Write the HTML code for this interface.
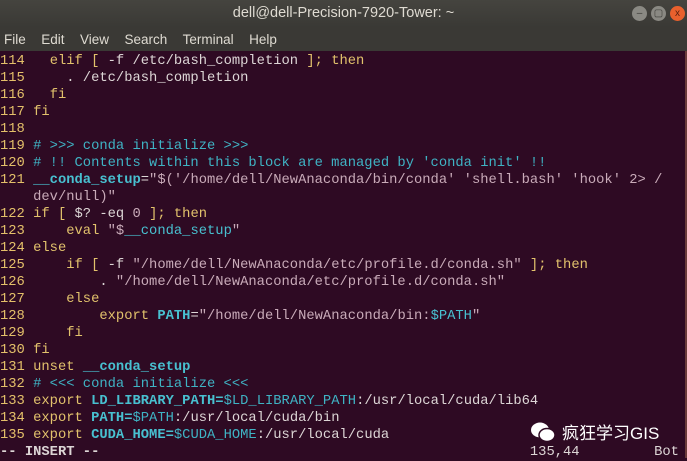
<!DOCTYPE html>
<html><head><meta charset="utf-8"><style>
*{margin:0;padding:0;box-sizing:border-box}
body{width:687px;height:458px;overflow:hidden;background:#2e0a23;font-family:"Liberation Sans",sans-serif}
#title{position:absolute;left:0;top:0;width:687px;height:27px;background:linear-gradient(#45443f,#3a3935);color:#dfdbd2;font-size:14.5px;text-align:center;line-height:27px}
#menu{position:absolute;left:0;top:27px;width:687px;height:24px;background:#3a3935;color:#dfdbd2;font-size:13.5px;line-height:26px;padding-left:4px;word-spacing:4px}
.btn{position:absolute;top:6px;width:15px;height:15px;border-radius:50%;background:#8a8983;color:#3d3c38;font-size:10px;line-height:15px;text-align:center}
#term{position:absolute;left:0;top:51px;width:687px;height:407px;border-right:2px solid #6a3a3a;padding-top:2px}
pre{font-family:"Liberation Mono",monospace;font-size:13.8px;line-height:17px;color:#ddd6d6;white-space:pre}
.n{color:#e4c06a}.k{color:#e2c26c}.c{color:#3fb3c4}.v{color:#48c0d0;font-weight:bold}.s{color:#c9abb9}
#wm{position:absolute;left:530px;top:419px;color:#fff;font-size:17px;font-family:"Liberation Sans","Noto Sans CJK SC",sans-serif}
</style></head><body>
<div id="title">dell@dell-Precision-7920-Tower: ~</div>
<div class="btn" style="left:632px">–</div>
<div class="btn" style="left:651px">▢</div>
<div class="btn" style="left:670px;background:#e9602d;color:#5a2010">x</div>
<div id="menu">File&nbsp; Edit&nbsp; View&nbsp; Search&nbsp; Terminal&nbsp; Help</div>
<div id="term"><pre><span class="n">114</span>   <span class="k">elif</span> <span class="k">[</span> -f /etc/bash_completion <span class="k">]; then</span>
<span class="n">115</span>     . /etc/bash_completion
<span class="n">116</span>   <span class="k">fi</span>
<span class="n">117</span> <span class="k">fi</span>
<span class="n">118</span>
<span class="n">119</span> <span class="c"># &gt;&gt;&gt; conda initialize &gt;&gt;&gt;</span>
<span class="n">120</span> <span class="c"># !! Contents within this block are managed by 'conda init' !!</span>
<span class="n">121</span> <span class="v">__conda_setup</span>=<span class="s">"$('/home/dell/NewAnaconda/bin/conda' 'shell.bash' 'hook' 2&gt; /</span>
    <span class="s">dev/null)"</span>
<span class="n">122</span> <span class="k">if [</span> $? -eq <span class="s">0</span> <span class="k">]; then</span>
<span class="n">123</span>     <span class="k">eval</span> <span class="s">"$</span><span class="v" style="font-weight:normal">__conda_setup</span><span class="s">"</span>
<span class="n">124</span> <span class="k">else</span>
<span class="n">125</span>     <span class="k">if [</span> -f <span class="s">"/home/dell/NewAnaconda/etc/profile.d/conda.sh"</span> <span class="k">]; then</span>
<span class="n">126</span>         . <span class="s">"/home/dell/NewAnaconda/etc/profile.d/conda.sh"</span>
<span class="n">127</span>     <span class="k">else</span>
<span class="n">128</span>         <span class="k">export</span> <span class="v">PATH</span>=<span class="s">"/home/dell/NewAnaconda/bin:</span><span class="v" style="font-weight:normal">$PATH</span><span class="s">"</span>
<span class="n">129</span>     <span class="k">fi</span>
<span class="n">130</span> <span class="k">fi</span>
<span class="n">131</span> <span class="k">unset</span> <span class="v">__conda_setup</span>
<span class="n">132</span> <span class="c"># &lt;&lt;&lt; conda initialize &lt;&lt;&lt;</span>
<span class="n">133</span> <span class="k">export</span> <span class="v">LD_LIBRARY_PATH=</span><span class="c">$LD_LIBRARY_PATH</span>:/usr/local/cuda/lib64
<span class="n">134</span> <span class="k">export</span> <span class="v">PATH=</span><span class="c">$PATH</span>:/usr/local/cuda/bin
<span class="n">135</span> <span class="k">export</span> <span class="v">CUDA_HOME=</span><span class="c">$CUDA_HOME</span>:/usr/local/cuda
<b>-- INSERT --</b>                                                    135,44         Bot</pre></div>
<div id="wm"><svg width="26" height="22" viewBox="0 0 26 22" style="vertical-align:-4px;margin-right:6px"><ellipse cx="10" cy="9" rx="9" ry="7.5" fill="#fff"/><ellipse cx="17" cy="14" rx="8" ry="6.5" fill="#fff" stroke="#2e0a23" stroke-width="1.5"/></svg>疯狂学习GIS</div>
</body></html>
